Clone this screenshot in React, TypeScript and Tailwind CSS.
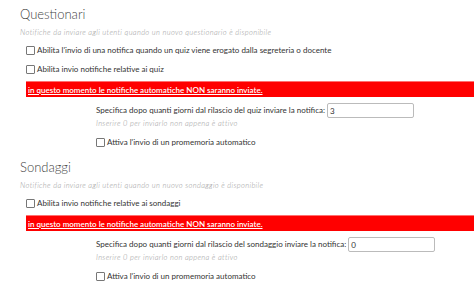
import React from "react";

function Check({ label, className = "" }: { label: string; className?: string }) {
  return (
    <label className={`flex items-center gap-[2px] h-[12px] text-[8px] leading-[12px] text-[#333] ${className}`}>
      <span className="inline-block w-[9px] h-[9px] border border-[#777] rounded-[1px] bg-white" />
      <span>{label}</span>
    </label>
  );
}

function Section({
  title,
  subtitle,
  checks,
  daysLabel,
  value,
  className = "",
}: {
  title: string;
  subtitle: string;
  checks: string[];
  daysLabel: string;
  value: string;
  className?: string;
}) {
  return (
    <section className={className}>
      <h2 className="pl-[20px] h-[16px] text-[13px] leading-[16px] font-light text-[#444]">{title}</h2>
      <p className="pl-[20px] mt-[6px] h-[10px] text-[7.5px] leading-[10px] italic font-light text-[#999] tracking-[0.35px]">
        {subtitle}
      </p>
      <div className="pl-[26px]">
        {checks.map((c, i) => (
          <Check key={c} label={c} className={i === 0 ? "mt-[6px]" : "mt-[7px]"} />
        ))}
      </div>
      <div className="ml-[26px] mt-[6px] h-[16px] bg-[#ff0000] border-t border-[#ff7070] flex items-center pl-[2px]">
        <a className="text-white text-[8px] leading-[12px] font-semibold underline">
          in questo momento le notifiche automatiche NON saranno inviate.
        </a>
      </div>
      <div className="pl-[96px] mt-[6px]">
        <div className="flex items-start gap-[2px] h-[15px] text-[8px] text-[#333]">
          <span className="leading-[14px]">{daysLabel}</span>
          <div className="w-[87px] h-[15px] border border-[#bbb] rounded-[2px] px-[2px] flex items-center leading-[12px]">
            {value}
          </div>
        </div>
        <p className="mt-[1px] h-[10px] text-[7.5px] leading-[10px] italic font-light text-[#999] tracking-[0.35px]">
          Inserire 0 per inviarlo non appena è attivo
        </p>
        <Check label="Attiva l'invio di un promemoria automatico" className="mt-[7px]" />
      </div>
    </section>
  );
}

export default function App() {
  return (
    <div
      className="w-[474px] h-[294px] bg-white overflow-hidden pt-[6px]"
      style={{ fontFamily: "Lato, 'Open Sans', sans-serif" }}
    >
      <Section
        title="Questionari"
        subtitle="Notifiche da inviare agli utenti quando un nuovo questionario è disponibile"
        checks={[
          "Abilita l'invio di una notifica quando un quiz viene erogato dalla segreteria o docente",
          "Abilita invio notifiche relative ai quiz",
        ]}
        daysLabel="Specifica dopo quanti giorni dal rilascio del quiz inviare la notifica:"
        value="3"
      />
      <Section
        className="mt-[11px]"
        title="Sondaggi"
        subtitle="Notifiche da inviare agli utenti quando un nuovo sondaggio è disponibile"
        checks={["Abilita invio notifiche relative ai sondaggi"]}
        daysLabel="Specifica dopo quanti giorni dal rilascio del sondaggio inviare la notifica:"
        value="0"
      />
    </div>
  );
}
